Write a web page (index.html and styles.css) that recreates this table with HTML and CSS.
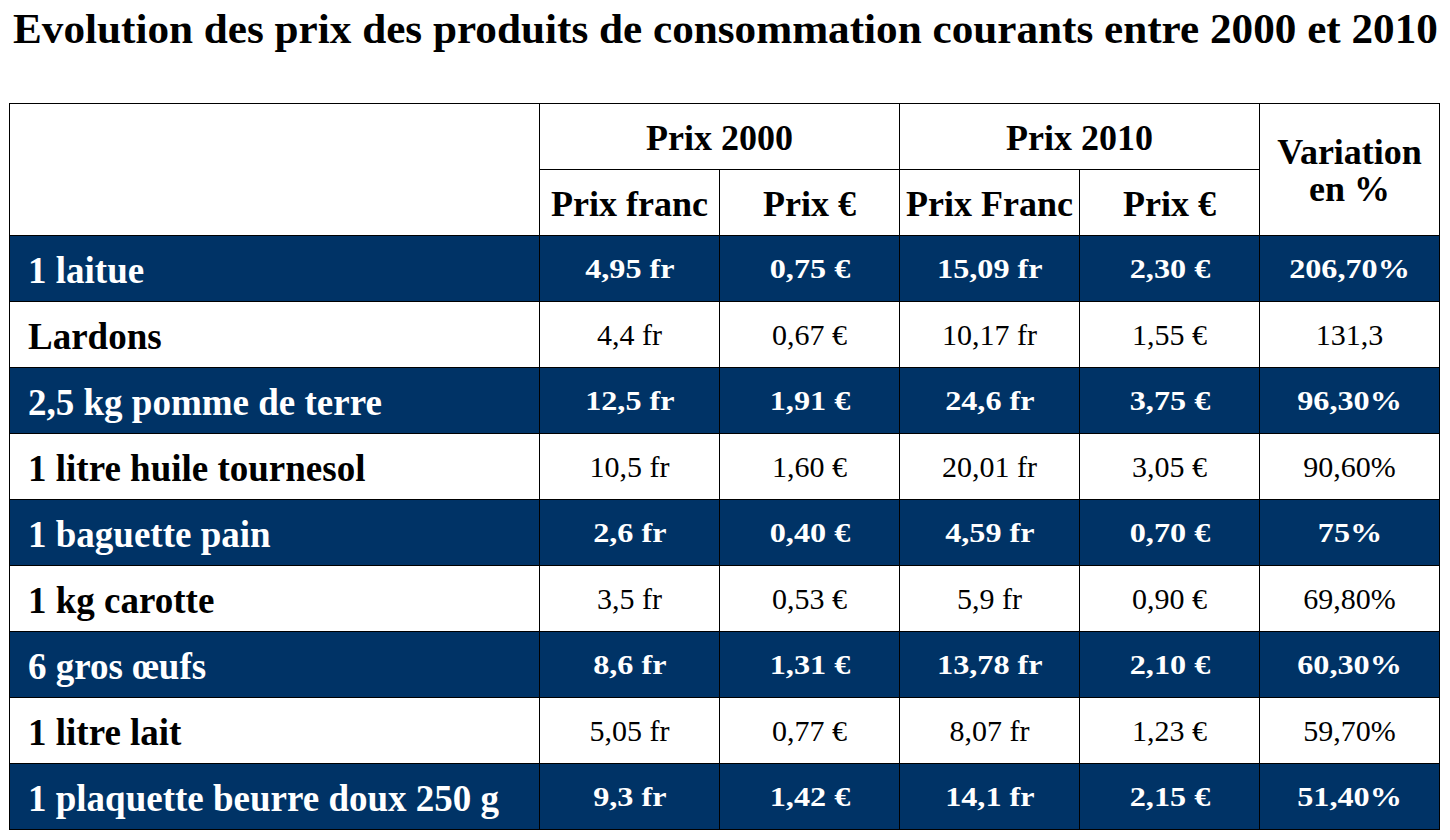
FILE: index.html
```html
<!DOCTYPE html>
<html lang="fr">
<head>
<meta charset="utf-8">
<title>Evolution des prix</title>
<link rel="stylesheet" href="styles.css">
</head>
<body>
<h1 class="title">Evolution des prix des produits de consommation courants entre 2000 et 2010</h1>
<table class="prices">
  <colgroup>
    <col class="col-label">
    <col class="col-num"><col class="col-num"><col class="col-num"><col class="col-num"><col class="col-num">
  </colgroup>
  <thead>
    <tr>
      <th rowspan="2" class="corner"></th>
      <th colspan="2">Prix 2000</th>
      <th colspan="2">Prix 2010</th>
      <th rowspan="2" class="variation">Variation<br>en %</th>
    </tr>
    <tr>
      <th>Prix franc</th>
      <th>Prix €</th>
      <th>Prix Franc</th>
      <th>Prix €</th>
    </tr>
  </thead>
  <tbody>
    <tr class="dark">
      <td class="label">1 laitue</td>
      <td><span class="v">4,95 fr</span></td><td><span class="v">0,75 €</span></td>
      <td><span class="v">15,09 fr</span></td><td><span class="v">2,30 €</span></td>
      <td><span class="v">206,70%</span></td>
    </tr>
    <tr class="light">
      <td class="label">Lardons</td>
      <td><span class="v">4,4 fr</span></td><td><span class="v">0,67 €</span></td>
      <td><span class="v">10,17 fr</span></td><td><span class="v">1,55 €</span></td>
      <td><span class="v">131,3</span></td>
    </tr>
    <tr class="dark">
      <td class="label">2,5 kg pomme de terre</td>
      <td><span class="v">12,5 fr</span></td><td><span class="v">1,91 €</span></td>
      <td><span class="v">24,6 fr</span></td><td><span class="v">3,75 €</span></td>
      <td><span class="v">96,30%</span></td>
    </tr>
    <tr class="light">
      <td class="label">1 litre huile tournesol</td>
      <td><span class="v">10,5 fr</span></td><td><span class="v">1,60 €</span></td>
      <td><span class="v">20,01 fr</span></td><td><span class="v">3,05 €</span></td>
      <td><span class="v">90,60%</span></td>
    </tr>
    <tr class="dark">
      <td class="label">1 baguette pain</td>
      <td><span class="v">2,6 fr</span></td><td><span class="v">0,40 €</span></td>
      <td><span class="v">4,59 fr</span></td><td><span class="v">0,70 €</span></td>
      <td><span class="v">75%</span></td>
    </tr>
    <tr class="light">
      <td class="label">1 kg carotte</td>
      <td><span class="v">3,5 fr</span></td><td><span class="v">0,53 €</span></td>
      <td><span class="v">5,9 fr</span></td><td><span class="v">0,90 €</span></td>
      <td><span class="v">69,80%</span></td>
    </tr>
    <tr class="dark">
      <td class="label">6 gros œufs</td>
      <td><span class="v">8,6 fr</span></td><td><span class="v">1,31 €</span></td>
      <td><span class="v">13,78 fr</span></td><td><span class="v">2,10 €</span></td>
      <td><span class="v">60,30%</span></td>
    </tr>
    <tr class="light">
      <td class="label">1 litre lait</td>
      <td><span class="v">5,05 fr</span></td><td><span class="v">0,77 €</span></td>
      <td><span class="v">8,07 fr</span></td><td><span class="v">1,23 €</span></td>
      <td><span class="v">59,70%</span></td>
    </tr>
    <tr class="dark">
      <td class="label">1 plaquette beurre doux 250 g</td>
      <td><span class="v">9,3 fr</span></td><td><span class="v">1,42 €</span></td>
      <td><span class="v">14,1 fr</span></td><td><span class="v">2,15 €</span></td>
      <td><span class="v">51,40%</span></td>
    </tr>
  </tbody>
</table>
</body>
</html>
```
FILE: styles.css
```css
html, body {
  margin: 0;
  padding: 0;
  background: #ffffff;
}

body {
  font-family: "Liberation Serif", "Times New Roman", serif;
  color: #000000;
}

.title {
  margin: 0;
  padding: 4px 0 0 13px;
  font-size: 43.2px;
  line-height: 50px;
  font-weight: bold;
  white-space: nowrap;
}

.prices {
  margin: 49px 0 0 9px;
  border-collapse: collapse;
  table-layout: fixed;
  width: 1431px;
}

.col-label { width: 530px; }
.col-num { width: 180px; }

.prices tr {
  height: 66px;
}

.prices th,
.prices td {
  border: 1px solid #000000;
  padding: 0;
  text-align: center;
  vertical-align: middle;
}

.prices th {
  font-size: 36px;
  font-weight: bold;
  line-height: 40px;
  padding-top: 2px;
}

.prices th.variation {
  line-height: 37px;
  padding-top: 3px;
}

.prices td {
  padding-top: 5px;
  line-height: 40px;
}

.prices td.label {
  text-align: left;
  padding-left: 18px;
  font-size: 37px;
  font-weight: bold;
  white-space: nowrap;
}

.prices .v {
  display: inline-block;
}

.dark td {
  background: #003366;
  color: #ffffff;
}

.dark .v {
  font-size: 28px;
  font-weight: bold;
  transform: scaleX(1.15);
}

.light td {
  background: #ffffff;
  color: #000000;
}

.light .v {
  font-size: 30px;
  font-weight: normal;
}
```
